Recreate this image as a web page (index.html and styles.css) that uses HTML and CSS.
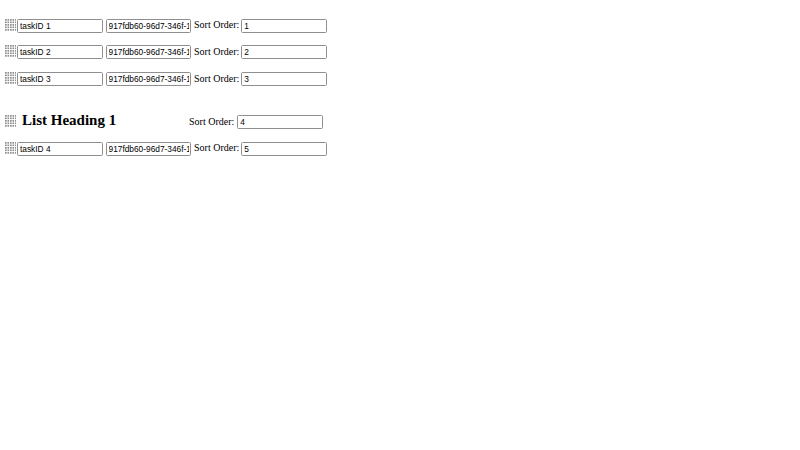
FILE: index.html
```html
<html lang="en">
<head>
    <meta charset="UTF-8">
    <title>Sort List</title>
    <link rel="stylesheet" href="styles.css">
</head>
<body>
	<div id="list" class="list">

		<div class="row">
			<svg class="handle" viewBox="0 0 11 12"><use href="#dots"/></svg>
			<input class="field" type="text" value="taskID 1">
			<input class="field field-guid" type="text" value="917fdb60-96d7-346f-1">
			<label class="sort-label">Sort Order:</label>
			<input class="field" type="text" value="1">
		</div>

		<div class="row">
			<svg class="handle" viewBox="0 0 11 12"><use href="#dots"/></svg>
			<input class="field" type="text" value="taskID 2">
			<input class="field field-guid" type="text" value="917fdb60-96d7-346f-1">
			<label class="sort-label">Sort Order:</label>
			<input class="field" type="text" value="2">
		</div>

		<div class="row">
			<svg class="handle" viewBox="0 0 11 12"><use href="#dots"/></svg>
			<input class="field" type="text" value="taskID 3">
			<input class="field field-guid" type="text" value="917fdb60-96d7-346f-1">
			<label class="sort-label">Sort Order:</label>
			<input class="field" type="text" value="3">
		</div>

		<div class="row row-heading">
			<svg class="handle" viewBox="0 0 11 12"><use href="#dots"/></svg>
			<h2 class="heading">List Heading 1</h2>
			<label class="sort-label">Sort Order:</label>
			<input class="field" type="text" value="4">
		</div>

		<div class="row">
			<svg class="handle" viewBox="0 0 11 12"><use href="#dots"/></svg>
			<input class="field" type="text" value="taskID 4">
			<input class="field field-guid" type="text" value="917fdb60-96d7-346f-1">
			<label class="sort-label">Sort Order:</label>
			<input class="field" type="text" value="5">
		</div>

	</div>

	<svg class="defs" width="0" height="0">
		<defs>
			<pattern id="dot" width="2.5" height="2.5" patternUnits="userSpaceOnUse">
				<rect x="0.2" y="0.2" width="1.3" height="1.3" fill="#444"/>
			</pattern>
			<rect id="dots" width="11" height="12" fill="url(#dot)"/>
		</defs>
	</svg>
</body>
</html>
```

FILE: styles.css
```css
body {
	margin: 0;
	font-family: "Liberation Serif", serif;
	font-size: 10px;
	color: #000;
}

.list {
	padding: 12.2px 0 0 5px;
}

.row {
	display: flex;
	align-items: center;
	height: 26.8px;
}

.row-heading {
	box-sizing: border-box;
	align-items: baseline;
	height: 29px;
	margin-top: 14px;
	padding-top: 5px;
}

.handle {
	width: 11px;
	height: 12px;
	margin-right: 1px;
	margin-bottom: 2px;
	flex: none;
}

.row-heading .handle {
	align-self: flex-start;
	margin-top: 3px;
	margin-bottom: 0;
}

.field {
	box-sizing: border-box;
	width: 86px;
	height: 14px;
	margin: 0;
	padding: 0 2px;
	border: 1px solid #8f8f8f;
	border-radius: 1.5px;
	background: #fff;
	color: #000;
	font-family: "Liberation Sans", sans-serif;
	font-size: 8.33px;
	outline: none;
}

.field-guid {
	width: 85px;
	margin-left: 3px;
	padding: 0 1.5px;
}

.sort-label {
	margin: 0 2px 2px 3px;
}

.row-heading .sort-label {
	margin-right: 3px;
}

.heading {
	width: 164px;
	margin: 0 0 0 5px;
	font-size: 15px;
	font-weight: bold;
}

.defs {
	position: absolute;
}
```
